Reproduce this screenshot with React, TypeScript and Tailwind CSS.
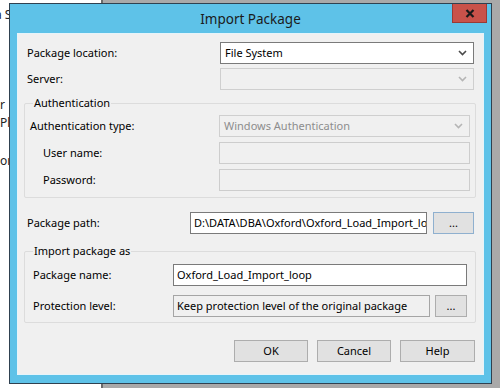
import React from 'react';

const font = { fontFamily: '"Segoe UI", "Noto Sans", "Liberation Sans", sans-serif' };

function Chevron({ color = '#444' }: { color?: string }) {
  return (
    <svg width="9" height="6" viewBox="0 0 9 6" className="shrink-0">
      <path d="M1 1 L4.5 4.5 L8 1" fill="none" stroke={color} strokeWidth="1.6" />
    </svg>
  );
}

function Select({ value, disabled, w }: { value?: string; disabled?: boolean; w: string }) {
  return (
    <div
      className={`${w} h-[22px] flex items-center justify-between pl-[4px] pr-[6px] border ${
        disabled ? 'border-[#cfcfcf] bg-[#f0f0f0] text-[#8d8d8d]' : 'border-[#7a7a7a] bg-white text-black'
      }`}
    >
      <span>{value}</span>
      <Chevron color={disabled ? '#b5b5b5' : '#4a4a4a'} />
    </div>
  );
}

function Field({ value, w, disabled, readOnly }: { value?: string; w: string; disabled?: boolean; readOnly?: boolean }) {
  const cls = disabled
    ? 'border-[#cdcdcd] bg-[#f0f0f0]'
    : readOnly
    ? 'border-[#a5a5a5] bg-[#f0f0f0]'
    : 'border-[#7a7a7a] bg-white';
  return (
    <div className={`${w} h-[22px] flex items-center pl-[3px] border overflow-hidden ${cls}`}>
      <span className="whitespace-nowrap">{value}</span>
    </div>
  );
}

function Btn({ children, w, blue }: { children: React.ReactNode; w: string; blue?: boolean }) {
  return (
    <div
      className={`${w} h-[22px] flex items-center justify-center border bg-[#e1e1e1] ${
        blue ? 'border-[#8fb0cf]' : 'border-[#adadad]'
      }`}
    >
      {children}
    </div>
  );
}

export default function App() {
  return (
    <div className="relative w-[500px] h-[388px] overflow-hidden flex bg-[#a9a9a9] text-[11px]" style={font}>
      {/* desktop behind the dialog */}
      <div className="w-[103px] h-full bg-white border-r-2 border-[#6b6b6b] flex flex-col text-[#222] text-[12px] leading-none">
        <span className="mt-[9px] -ml-[5px]">a S</span>
        <span className="mt-[78px]">r</span>
        <span className="mt-[6px]">Pl</span>
        <span className="mt-[26px]">or</span>
      </div>

      {/* dialog window */}
      <div className="absolute left-[9px] top-[3px] w-[483px] h-[381px] border border-[#2f4150] bg-[#5ec2e8] flex flex-col">
        <div className="relative h-[29px] flex items-center justify-center">
          <span className="text-[13.5px] text-[#1b1b1b] mt-[1px]">Import Package</span>
          <div className="absolute right-[4px] top-0 w-[35px] h-[19px] bg-[#c9524a] border border-[#9a3a35] border-t-0 flex items-center justify-center">
            <svg width="10" height="9" viewBox="0 0 10 9">
              <path d="M1.5 1 L8.5 8 M8.5 1 L1.5 8" stroke="#1a1a1a" strokeWidth="2.2" />
            </svg>
          </div>
        </div>

        <div className="flex-1 mx-[7px] mb-[8px] bg-[#f0f0f0] border border-[#e6f4fa] text-black flex flex-col pl-[9px] pr-[9px] pt-[8px]">
          <div className="flex items-center justify-between">
            <span>Package location:</span>
            <Select value="File System" w="w-[254px]" />
          </div>
          <div className="flex items-center justify-between mt-[4px]">
            <span>Server:</span>
            <Select disabled w="w-[254px]" />
          </div>

          {/* Authentication group */}
          <div className="relative -ml-[3px] mr-[-2px] mt-[13px] h-[95px] border border-[#dcdcdc] rounded-[2px] pt-[11px] pl-[5px] pr-[5px] flex flex-col">
            <span className="absolute -top-[9px] left-[8px] bg-[#f0f0f0] px-[1px]">Authentication</span>
            <div className="flex items-center justify-between">
              <span>Authentication type:</span>
              <Select value="Windows Authentication" disabled w="w-[251px]" />
            </div>
            <div className="flex items-center justify-between mt-[5px] pl-[13px]">
              <span>User name:</span>
              <Field disabled w="w-[251px]" />
            </div>
            <div className="flex items-center justify-between mt-[5px] pl-[13px]">
              <span>Password:</span>
              <Field disabled w="w-[251px]" />
            </div>
          </div>

          <div className="flex items-center mt-[14px]">
            <span>Package path:</span>
            <div className="ml-auto flex items-center gap-[6px]">
              <Field value="D:\DATA\DBA\Oxford\Oxford_Load_Import_loop" w="w-[237px]" />
              <Btn w="w-[41px]" blue>...</Btn>
            </div>
          </div>

          {/* Import package as group */}
          <div className="relative -ml-[3px] mr-[-2px] mt-[17px] h-[72px] border border-[#dcdcdc] rounded-[2px] pt-[12px] pl-[8px] pr-[8px] flex flex-col">
            <span className="absolute -top-[9px] left-[8px] bg-[#f0f0f0] px-[1px]">Import package as</span>
            <div className="flex items-center justify-between">
              <span>Package name:</span>
              <Field value="Oxford_Load_Import_loop" w="w-[294px]" />
            </div>
            <div className="flex items-center mt-[9px]">
              <span>Protection level:</span>
              <div className="ml-auto flex items-center gap-[5px]">
                <Field value="Keep protection level of the original package" readOnly w="w-[257px]" />
                <Btn w="w-[32px]">...</Btn>
              </div>
            </div>
          </div>

          <div className="flex justify-end gap-[9px] mt-[17px] -mr-[1px]">
            <Btn w="w-[74px]">OK</Btn>
            <Btn w="w-[74px]">Cancel</Btn>
            <Btn w="w-[75px]">Help</Btn>
          </div>
        </div>
      </div>
    </div>
  );
}
